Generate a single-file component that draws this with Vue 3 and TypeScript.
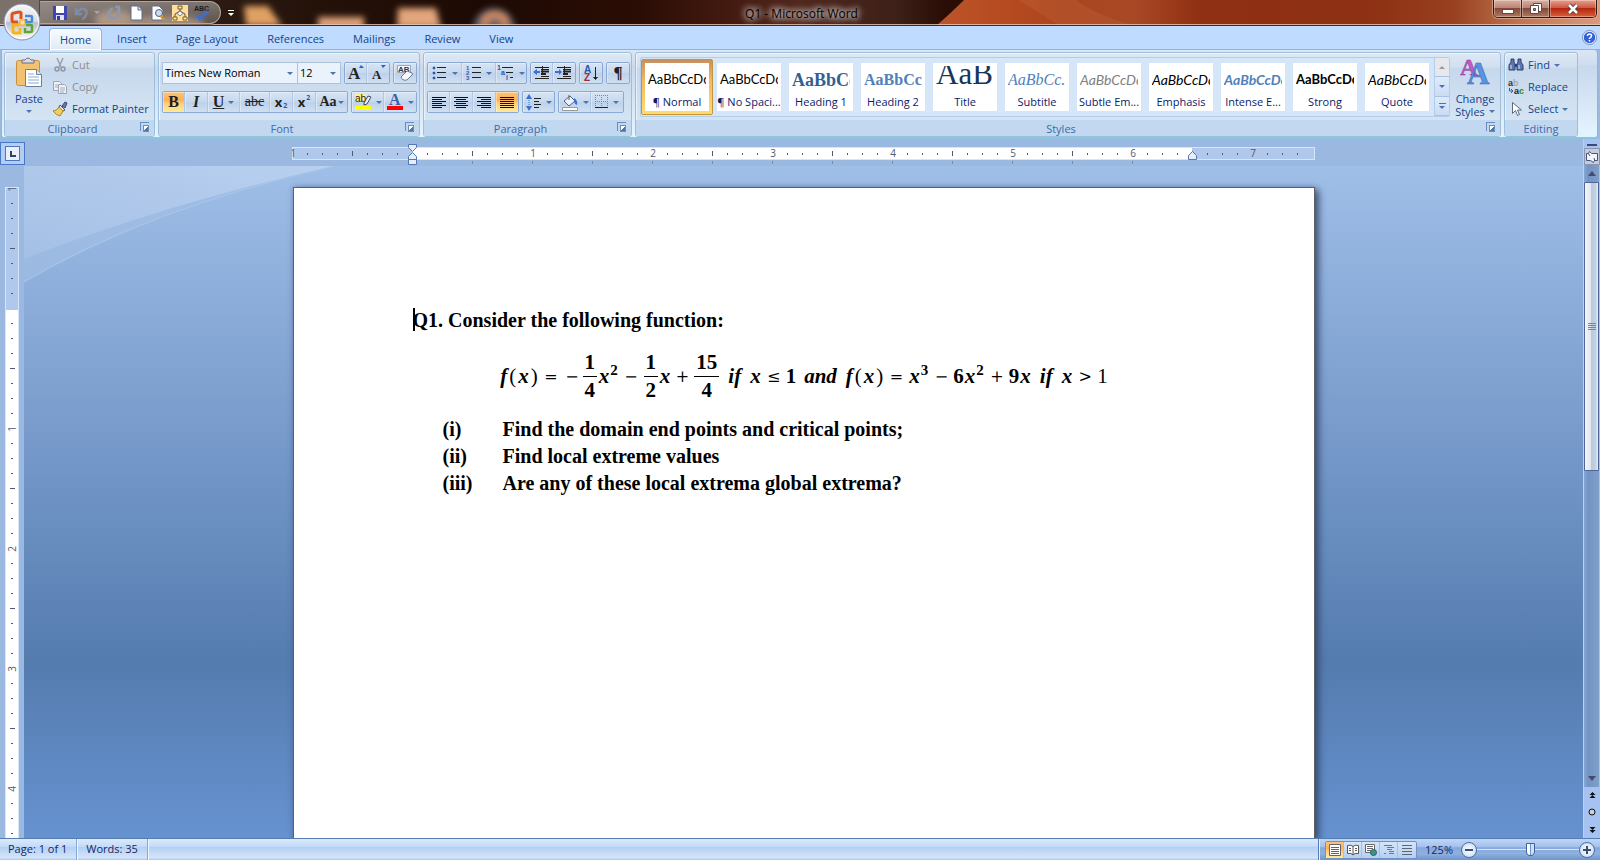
<script setup lang="ts">
import { ref } from 'vue'

interface StyleTile { name: string; sample: string; kind: string }
interface Tick { at: number; label: string; half: boolean }

const tabs: string[] = ['Home', 'Insert', 'Page Layout', 'References', 'Mailings', 'Review', 'View']
const activeTab = ref('Home')

const tiles: StyleTile[] = [
  { name: '¶ Normal', sample: 'AaBbCcDc', kind: 'plain' },
  { name: '¶ No Spaci...', sample: 'AaBbCcDc', kind: 'plain' },
  { name: 'Heading 1', sample: 'AaBbCc', kind: 'h1' },
  { name: 'Heading 2', sample: 'AaBbCc', kind: 'h2' },
  { name: 'Title', sample: 'AaB', kind: 'title' },
  { name: 'Subtitle', sample: 'AaBbCc.', kind: 'subtitle' },
  { name: 'Subtle Em...', sample: 'AaBbCcDc', kind: 'subtle' },
  { name: 'Emphasis', sample: 'AaBbCcDc', kind: 'emphasis' },
  { name: 'Intense E...', sample: 'AaBbCcDc', kind: 'intense' },
  { name: 'Strong', sample: 'AaBbCcDc', kind: 'strong' },
  { name: 'Quote', sample: 'AaBbCcDc', kind: 'emphasis' },
]
const activeTile = ref('¶ Normal')

const zoom = ref(125)

/* One tick every eighth of an inch; an inch is 120px at 125% zoom. */
function makeTicks(count: number): Tick[] {
  return Array.from({ length: count }, (_, i) => {
    const eighth = i - 8
    const whole = eighth % 8 === 0
    return {
      at: i * 15,
      label: whole && eighth !== 0 ? String(Math.abs(eighth / 8)) : '',
      half: Math.abs(eighth % 8) === 4,
    }
  }).filter((t) => t.at !== 120)
}
const hTicks = makeTicks(68)
const vTicks = makeTicks(90)
const tabStops: number[] = Array.from({ length: 12 }, (_, i) => 180 + i * 60)

const questions = [
  { no: '(i)', text: 'Find the domain end points and critical points;' },
  { no: '(ii)', text: 'Find local extreme values' },
  { no: '(iii)', text: 'Are any of these local extrema global extrema?' },
]
</script>

<template>
  <div class="app">
    <header class="titlebar">
      <svg class="wallpaper" viewBox="0 0 1600 26" preserveAspectRatio="none" aria-hidden="true">
        <defs>
          <linearGradient id="wall" x1="0" x2="1" y1="0" y2="0">
            <stop offset="0" stop-color="#7b716b" /><stop offset=".028" stop-color="#7d736d" />
            <stop offset=".05" stop-color="#5f5149" /><stop offset=".14" stop-color="#2b1a12" />
            <stop offset=".2" stop-color="#241209" /><stop offset=".3" stop-color="#1d0a04" />
            <stop offset=".4" stop-color="#2b0d05" /><stop offset=".455" stop-color="#431a10" />
            <stop offset=".5" stop-color="#50281e" /><stop offset=".56" stop-color="#3d2018" />
            <stop offset=".59" stop-color="#2a0e06" />
          </linearGradient>
          <linearGradient id="rust" x1="0" x2="1" y1="0" y2="0">
            <stop offset="0" stop-color="#bd5429" /><stop offset=".12" stop-color="#b4491f" />
            <stop offset=".2" stop-color="#a9461f" /><stop offset=".3" stop-color="#a84825" />
            <stop offset=".4" stop-color="#8f2f13" />
            <stop offset=".65" stop-color="#8d3013" /><stop offset=".78" stop-color="#98401f" />
            <stop offset=".88" stop-color="#c07552" /><stop offset="1" stop-color="#dc9a7a" />
          </linearGradient>
          <filter id="soft" x="-20%" y="-60%" width="140%" height="220%"><feGaussianBlur stdDeviation="3" /></filter>
        </defs>
        <rect width="1600" height="26" fill="url(#wall)" />
        <g filter="url(#soft)">
          <ellipse cx="115" cy="20" rx="20" ry="10" fill="#d8b08c" />
          <ellipse cx="165" cy="24" rx="40" ry="9" fill="#b59a84" />
          <path d="M244 6h24l14 20h-36z" fill="#e0a063" />
          <path d="M318 17h46v12h-46z" fill="#e0a27a" />
          <path d="M398 8h38l5 20h-44z" fill="#e2a57c" />
          <circle cx="494" cy="29" r="21" fill="#5d6068" />
          <path d="M484 26q1-11 11-11q10 0 11 11" fill="none" stroke="#d08a60" stroke-width="7" />
        </g>
        <path d="M936 26Q952 12 964 0H1600V26z" fill="url(#rust)" />
        <path d="M1018 0q24 14 42 26h74Q1090 12 1076 0z" fill="#c5683e" opacity=".3" />
        <path d="M0 24.500H1600" stroke="#e9c9b5" stroke-width="1" opacity=".8" />
        <path d="M0 25.500H1600" stroke="#3b2a25" stroke-width="1" />
      </svg>

      <nav class="quick" aria-label="Quick access">
        <button aria-label="Save"><svg width="16" height="16" viewBox="0 0 16 16"><path d="M1 1h14v14H2l-1-1z" fill="#4146ad" /><path d="M4 1h8v7H4z" fill="#fff" /><path d="M4 10h8v5H4z" fill="#dde2fb" /><path d="M5 11h3v4H5z" fill="#383a94" /></svg></button>
        <button aria-label="Undo" class="dim undo"><svg width="16" height="16" viewBox="0 0 16 16"><path d="M2 3v6h6M2.500 8Q6 3 10 4t2 6q-1 3-4 4" fill="none" stroke="#7d8ba8" stroke-width="2.500" /></svg><i class="arr pale"></i></button>
        <button aria-label="Repeat" class="dim"><svg width="16" height="16" viewBox="0 0 16 16"><path d="M9 2h4v5M12 4Q15 10 9 13 3 14 3 9q0-4 4-6" fill="none" stroke="#8a98b2" stroke-width="2.500" /></svg></button>
        <button aria-label="New"><svg width="16" height="16" viewBox="0 0 16 16"><path d="M3 1h7l4 4v10H3z" fill="#fff" stroke="#5f6d8c" /><path d="M10 1v4h4" fill="#d6e2f2" stroke="#5f6d8c" /></svg></button>
        <button aria-label="Print Preview"><svg width="16" height="16" viewBox="0 0 16 16"><path d="M2 1h7l4 4v10H2z" fill="#fff" stroke="#5f6d8c" /><circle cx="9" cy="8" r="3.500" fill="#c8dcf2" stroke="#525d72" /><path d="m11 11 3 4" stroke="#d99022" stroke-width="2.500" /></svg></button>
        <button aria-label="Diagram" class="hot"><svg width="16" height="16" viewBox="0 0 16 16"><path d="M8 4v2M8 6 3 9v3M8 6l5 3v3" fill="none" stroke="#6b5232" /><path d="M6 1h4v3H6zM1 12h4v3H1zM11 12h4v3h-4z" fill="#ffe9a5" stroke="#7a5c16" /><path d="m8 6 3 2.500L8 11 5 8.500z" fill="#eaf4ff" stroke="#77889c" /></svg></button>
        <button aria-label="Spelling"><svg width="18" height="18" viewBox="0 0 18 18"><text x="0" y="7" font-size="7" font-weight="bold" fill="#1b1b1b" font-family="Liberation Sans, sans-serif">ABC</text><path d="m3 11 3 4 8-8" fill="none" stroke="#3b6fd0" stroke-width="3" /></svg></button>
      </nav>
      <button class="customize" aria-label="Customize quick access"><i></i><i class="arr white"></i></button>
      <h1 class="wintitle">Q1 - Microsoft Word</h1>
      <div class="winbtns">
        <button aria-label="Minimize"><svg width="14" height="12" viewBox="0 0 14 12"><rect x="1.500" y="6.500" width="11" height="4" fill="#fff" stroke="#5d4a48" /></svg></button>
        <button aria-label="Restore"><svg width="14" height="13" viewBox="0 0 14 13"><path d="M4.500 1.500h8v8h-8z" fill="#fff" stroke="#5d4a48" /><path d="M1.500 3.500h8v8h-8z" fill="#fff" stroke="#5d4a48" /><path d="M4.500 6.500h2v2h-2z" fill="#b78274" stroke="#5d4a48" /></svg></button>
        <button aria-label="Close" class="close"><svg width="14" height="12" viewBox="0 0 14 12"><path d="m3 2 8 8M11 2l-8 8" stroke="#4d3a40" stroke-width="4.500" /><path d="m3 2 8 8M11 2l-8 8" stroke="#fff" stroke-width="2.500" /></svg></button>
      </div>
    </header>

    <button class="orb" aria-label="Office Button">
      <svg width="38" height="38" viewBox="0 0 38 38">
        <defs>
          <linearGradient id="orbg" x1="0" x2="0" y1="0" y2="1"><stop offset="0" stop-color="#f5f6f8" /><stop offset=".48" stop-color="#dcdfe6" /><stop offset=".52" stop-color="#b8bfcd" /><stop offset="1" stop-color="#fff" /></linearGradient>
        </defs>
        <circle cx="19" cy="19" r="18" fill="url(#orbg)" stroke="#8b90a0" stroke-width="1" />
        <circle cx="19" cy="19" r="16.500" fill="none" stroke="#fff" opacity=".8" />
        <g fill="none" stroke-width="3">
          <path d="M18 16V10q0-1-2-1l-5 1q-2 0-2 2v5q0 2 2 2h4" stroke="#e2501c" />
          <path d="M22 13h5q2 0 2 1v4q0 1-2 1h-4v-3" stroke="#4a8ad8" stroke-width="2.500" />
          <path d="M16 22h-5q-1 0-1 1v5q0 2 2 2h5v-5" stroke="#f5b51b" />
          <path d="M23 22h4q2 0 2 1v5q0 1-2 1h-5v-4" stroke="#5ea532" stroke-width="2.500" />
        </g>
        <path d="M17 17h5v5h-5z" fill="#fbe3a0" stroke="#f0a42c" />
      </svg>
    </button>

    <nav class="tabs" aria-label="Ribbon tabs">
      <button v-for="t in tabs" :key="t" :class="{ on: t === activeTab }" @click="activeTab = t">{{ t }}</button>
      <button class="help" aria-label="Help"><svg width="15" height="15" viewBox="0 0 15 15"><circle cx="7.500" cy="7.500" r="6.500" fill="#2f62dc" stroke="#fff" stroke-width="1.500" /><circle cx="7.500" cy="7.500" r="7" fill="none" stroke="#6b85b8" /><path d="M5.500 6q0-2 2-2t2 2q0 1-2 2.300v.7M7.500 10v1.500" fill="none" stroke="#fff" stroke-width="1.500" /></svg></button>
    </nav>

    <section class="ribbon">
      <div class="group clipboard">
        <div class="body">
          <button class="paste">
            <svg width="28" height="31" viewBox="0 0 28 31"><rect x="1.500" y="3.500" width="23" height="25" rx="2" fill="#f2c272" stroke="#c98f3a" /><path d="M7 6V3h3q3-4 6 0h3v3z" fill="#d9dce2" stroke="#6d6d75" /><path d="M10.500 12.500h11l5 5v12h-16z" fill="#fff" stroke="#6b7f9f" /><path d="M21.500 12.500v5h5" fill="#d9e5f5" stroke="#6b7f9f" /><path d="M13 17h6M13 20h11M13 23h11M13 26h11" stroke="#8fa8ce" /></svg>
            <span>Paste</span><i class="arr"></i>
          </button>
          <div class="stack">
            <button class="dim"><svg width="16" height="16" viewBox="0 0 16 16"><path d="m5 1 4 9M11 1 7 10" stroke="#9aa1ab" stroke-width="1.500" /><circle cx="5" cy="12" r="2" fill="none" stroke="#8f96a0" stroke-width="1.500" /><circle cx="11" cy="12" r="2" fill="none" stroke="#8f96a0" stroke-width="1.500" /></svg>Cut</button>
            <button class="dim"><svg width="16" height="16" viewBox="0 0 16 16"><path d="M1.500 2.500h6l2 2v7h-8z" fill="#eef2f7" stroke="#9ba4b3" /><path d="M3 6h4M3 8h4" stroke="#a5aebd" /><path d="M6.500 5.500h6l2 2v7h-8z" fill="#eef2f7" stroke="#9ba4b3" /><path d="M8 9h5M8 11h5M8 13h4" stroke="#a5aebd" /></svg>Copy</button>
            <button><svg width="16" height="16" viewBox="0 0 16 16"><path d="m10 5 3-4 2 1-2 5z" fill="#6a78a8" stroke="#3a4a7e" /><path d="m8 4 5 5-2 1-4-4z" fill="#e9e9ef" stroke="#555" /><path d="m7 6 4 4-3 5q-4-1-7-5 4 0 6-4z" fill="#f4cf5e" stroke="#a8842a" /></svg>Format Painter</button>
          </div>
        </div>
        <footer><span>Clipboard</span><button class="launch" aria-label="Clipboard dialog"></button></footer>
      </div>

      <div class="group font">
        <div class="body rows">
          <div class="row">
            <div class="combo family"><select aria-label="Font"><option>Times New Roman</option></select><i class="arr"></i></div>
            <div class="combo size"><select aria-label="Font size"><option>12</option></select><i class="arr"></i></div>
            <div class="box">
              <button class="w22" aria-label="Grow font"><svg width="18" height="18" viewBox="0 0 18 18"><text x="1" y="15" font-size="17" font-weight="bold" fill="#222" font-family="Liberation Serif, serif">A</text><path d="m12 4 2-3 3 3z" fill="#2f62c0" /></svg></button>
              <button class="w22" aria-label="Shrink font"><svg width="18" height="18" viewBox="0 0 18 18"><text x="3" y="15" font-size="13" font-weight="bold" fill="#222" font-family="Liberation Serif, serif">A</text><path d="m12 1 2 3 3-3z" fill="#2f62c0" /></svg></button>
            </div>
            <div class="box"><button class="w22" aria-label="Clear formatting"><svg width="18" height="18" viewBox="0 0 18 18"><path d="M1.500 1.500h13v7h-13z" fill="#f8fafc" stroke="#99a4b8" /><text x="2" y="8" font-size="8" font-weight="bold" fill="#333" font-family="Liberation Sans, sans-serif">AB</text><path d="m5 13 6-6 5 2q1 1 0 2l-5 5q-5 1-6-3z" fill="#f6f7fb" stroke="#6d7894" /></svg></button></div>
          </div>
          <div class="row">
            <div class="box">
              <button class="w22 lit glyph" aria-label="Bold"><b>B</b></button>
              <button class="w23 glyph" aria-label="Italic"><b><em>I</em></b></button>
              <button class="w32 glyph" aria-label="Underline"><b><u>U</u></b><i class="arr"></i></button>
              <button class="w28 glyph small" aria-label="Strikethrough"><s>abc</s></button>
              <button class="w23 glyph sans" aria-label="Subscript">x<sub>2</sub></button>
              <button class="w23 glyph sans" aria-label="Superscript">x<sup>2</sup></button>
              <button class="w30 glyph mid" aria-label="Change case">Aa<i class="arr"></i></button>
            </div>
            <div class="box">
              <button class="w32" aria-label="Highlight"><svg width="18" height="18" viewBox="0 0 18 18"><path d="M1 1h11v8H1z" fill="#fff28a" /><text x="1" y="9" font-size="10" fill="#222" font-family="Liberation Sans, sans-serif">ab</text><path d="m10 10 4-7 3 1-4 7-3 1z" fill="#e8eef8" stroke="#3f4c66" /><path d="M1 13h16v4H1z" fill="#ff0" /></svg><i class="arr"></i></button>
              <button class="w32" aria-label="Font color"><svg width="18" height="18" viewBox="0 0 18 18"><text x="3" y="12" font-size="16" font-weight="bold" fill="#3c5fa8" font-family="Liberation Serif, serif">A</text><path d="M1 13h16v4H1z" fill="#f00" /></svg><i class="arr"></i></button>
            </div>
          </div>
        </div>
        <footer><span>Font</span><button class="launch" aria-label="Font dialog"></button></footer>
      </div>

      <div class="group paragraph">
        <div class="body rows">
          <div class="row">
            <div class="box">
              <button class="w33" aria-label="Bullets"><svg width="16" height="16" viewBox="0 0 16 16"><path d="M5 2.500h9M5 7.500h9M5 12.500h9" stroke="#222" /><path d="M1 2h2v2H1zM1 7h2v2H1zM1 12h2v2H1z" fill="#2b57a8" stroke="#2b57a8" stroke-width=".5" /></svg><i class="arr"></i></button>
              <button class="w33" aria-label="Numbering"><svg width="16" height="16" viewBox="0 0 16 16"><path d="M6 2.500h9M6 7.500h9M6 12.500h9" stroke="#222" /><g font-size="6" font-weight="bold" fill="#2b57a8" font-family="Liberation Sans, sans-serif"><text x="0" y="5">1</text><text x="0" y="10">2</text><text x="0" y="15">3</text></g></svg><i class="arr"></i></button>
              <button class="w28" aria-label="Multilevel list"><svg width="18" height="16" viewBox="0 0 18 16"><path d="M5 2.500h11M9 7.500h7M13 12.500h3" stroke="#222" /><g font-size="7" font-weight="bold" fill="#2b57a8" font-family="Liberation Sans, sans-serif"><text x="0" y="5">1</text><text x="4" y="10">a</text><text x="9" y="15">i</text></g></svg><i class="arr"></i></button>
            </div>
            <div class="box">
              <button class="w22" aria-label="Decrease indent"><svg width="18" height="16" viewBox="0 0 18 16"><path d="M2 2.500h14M8 4.500h8M8 11.500h8M2 13.500h14" stroke="#222" /><path d="M8 9h5M8 6.500h8" stroke="#222" stroke-width="2" /><path d="M9.500 1v14" stroke="#222" stroke-dasharray="1 1" /><path d="m0 7 4-3v2h3v2H4v2z" fill="#3b6fd0" /></svg></button>
              <button class="w22" aria-label="Increase indent"><svg width="18" height="16" viewBox="0 0 18 16"><path d="M2 2.500h14M8 4.500h8M8 11.500h8M2 13.500h14" stroke="#222" /><path d="M8 9h5M8 6.500h8" stroke="#222" stroke-width="2" /><path d="M9.500 1v14" stroke="#222" stroke-dasharray="1 1" /><path d="M7 7 4 4v2H0v2h4v2z" fill="#3b6fd0" /></svg></button>
            </div>
            <div class="box"><button class="w22" aria-label="Sort"><svg width="16" height="17" viewBox="0 0 16 17"><g font-size="10" font-weight="bold" font-family="Liberation Sans, sans-serif"><text x="1" y="8" fill="#2b57a8">A</text><text x="1" y="16" fill="#9b2d3a">Z</text></g><path d="M12.500 2v12M10.500 12l2 2.500 2-2.500" fill="#222" stroke="#222" /></svg></button></div>
            <div class="box"><button class="w22 mark" aria-label="Show marks">¶</button></div>
          </div>
          <div class="row">
            <div class="box">
              <button class="w22" aria-label="Align left"><svg width="16" height="14" viewBox="0 0 16 14"><path d="M1 2.500h14M1 4.500h10M1 6.500h14M1 8.500h10M1 10.500h14M1 12.500h10" stroke="#111" /></svg></button>
              <button class="w23" aria-label="Center"><svg width="16" height="14" viewBox="0 0 16 14"><path d="M1 2.500h14M3 4.500h10M1 6.500h14M3 8.500h10M1 10.500h14M3 12.500h10" stroke="#111" /></svg></button>
              <button class="w23" aria-label="Align right"><svg width="16" height="14" viewBox="0 0 16 14"><path d="M1 2.500h14M5 4.500h10M1 6.500h14M5 8.500h10M1 10.500h14M5 12.500h10" stroke="#111" /></svg></button>
              <button class="w22 lit" aria-label="Justify"><svg width="16" height="14" viewBox="0 0 16 14"><path d="M1 2.500h14M1 4.500h14M1 6.500h14M1 8.500h14M1 10.500h14M1 12.500h14" stroke="#111" /></svg></button>
            </div>
            <div class="box"><button class="w30" aria-label="Line spacing"><svg width="16" height="17" viewBox="0 0 16 17"><path d="m3 0 3 5H0zM3 17l3-5H0z" fill="#3b6fd0" /><path d="M3 4v9" stroke="#3b6fd0" stroke-dasharray="1 1" /><path d="M8 4.500h7M8 7.500h5M8 10.500h7M8 13.500h5" stroke="#222" /></svg><i class="arr"></i></button></div>
            <div class="box">
              <button class="w32" aria-label="Shading"><svg width="18" height="17" viewBox="0 0 18 17"><path d="m3 7 6-5 5 5-6 5z" fill="#eef2f8" stroke="#55627c" /><path d="M8 6V1" stroke="#55627c" /><path d="M13 4q4 2 3 7-3-1-3-5z" fill="#3b6fd0" /><path d="M1.500 13.500h15v3h-15z" fill="#fff" stroke="#9a9a9a" /></svg><i class="arr"></i></button>
              <button class="w32" aria-label="Borders"><svg width="14" height="14" viewBox="0 0 14 14"><path d="M.5 0v14M6.500 0v14M12.500 0v14M0 .5h13M0 6.500h13" stroke="#7d8796" stroke-dasharray="1 1" /><path d="M0 12.500h13" stroke="#222" /></svg><i class="arr"></i></button>
            </div>
          </div>
        </div>
        <footer><span>Paragraph</span><button class="launch" aria-label="Paragraph dialog"></button></footer>
      </div>

      <div class="group styles">
        <div class="body">
          <div class="gallery">
            <div class="tiles">
              <button v-for="s in tiles" :key="s.name" class="tile" :class="{ on: s.name === activeTile }" @click="activeTile = s.name">
                <span class="face"><span class="sample" :class="s.kind">{{ s.sample }}</span><span class="cap">{{ s.name }}</span></span>
              </button>
            </div>
            <div class="scrolls">
              <button class="off" aria-label="Previous styles"><i class="arr up"></i></button>
              <button aria-label="Next styles"><i class="arr"></i></button>
              <button aria-label="More styles"><i class="bar"></i><i class="arr"></i></button>
            </div>
          </div>
          <button class="change">
            <svg width="30" height="28" viewBox="0 0 30 28"><g font-weight="bold" font-family="Liberation Serif, serif"><text x="0" y="18" font-size="24" fill="#c05bc4" stroke="#8a3b9a" stroke-width=".5">A</text><text x="7" y="27" font-size="31" fill="#5b93e0" stroke="#2f5fb0" stroke-width=".5">A</text></g></svg>
            <span>Change</span><span class="line">Styles <i class="arr"></i></span>
          </button>
        </div>
        <footer><span>Styles</span><button class="launch" aria-label="Styles dialog"></button></footer>
      </div>

      <div class="group editing">
        <div class="body stack">
          <button><svg width="16" height="16" viewBox="0 0 16 16"><path d="M3 2h3v3l1 2v6H1V8l2-3zM10 2h3v3l2 3v5H9V7l1-2z" fill="#5d77ae" stroke="#2c4376" /><path d="M7 7h2v3H7z" fill="#2c4376" /><path d="M3 8v4M11 8v4" stroke="#dfe9f8" /></svg>Find<i class="arr"></i></button>
          <button><svg width="16" height="16" viewBox="0 0 16 16"><g font-size="9" font-weight="bold" font-family="Liberation Sans, sans-serif"><text x="0" y="7" fill="#333">a</text><text x="5" y="7" fill="#aaa">b</text><text x="6" y="15" fill="#222">a</text><text x="11" y="15" fill="#2a8a2a">c</text></g><path d="M1.500 9v3h3M3 10l2 2-2 2" fill="none" stroke="#2f5fb0" /></svg>Replace</button>
          <button><svg width="16" height="16" viewBox="0 0 16 16"><path d="M4.500 1.500v11l3-3 2 5 2-1-2-4.500h4z" fill="#fff" stroke="#5d6b85" /></svg>Select<i class="arr"></i></button>
        </div>
        <footer><span>Editing</span></footer>
      </div>
    </section>

    <main class="workspace">
      <div class="corner"><button aria-label="Tab selector"><svg width="15" height="15" viewBox="0 0 15 15"><rect x=".5" y=".5" width="14" height="14" fill="#e9f0fa" stroke="#4a78c4" /><path d="M6 5v5h5" fill="none" stroke="#2d4468" stroke-width="2" /></svg></button></div>
      <div class="hruler">
        <svg width="1024" height="27" viewBox="0 0 1024 27">
          <rect x=".5" y="8.500" width="1022" height="12" fill="#b0c8ec" stroke="#d6e5f8" />
          <rect x="120" y="9" width="780" height="11" fill="#fff" />
          <g v-for="t in hTicks" :key="t.at">
            <text v-if="t.label" :x="t.at + 1" y="18" class="num">{{ t.label }}</text>
            <path v-else-if="t.half" :d="`M${t.at + 0.5} 12v5`" stroke="#4f5a70" />
            <path v-else :d="`M${t.at + 0.5} 14v2`" stroke="#4f5a70" />
          </g>
          <path v-for="s in tabStops" :key="s" :d="`M${s + 0.5} 22v3`" stroke="#7c8ca5" />
          <g fill="#e6eefa" stroke="#5177b5"><path d="M116.500 5.500h8v3l-4 4-4-4zM116.500 20.500v-3l4-4 4 4v3zM116.500 20.500h8v5h-8z" /><path d="M896.500 20.500v-4l4-4 4 4v4z" /></g>
        </svg>
      </div>
      <div class="vruler">
        <svg width="24" height="1400" viewBox="0 0 24 1400">
          <rect x="5.500" y="21.500" width="13" height="1360" fill="#b0c8ec" stroke="#d6e5f8" />
          <rect x="6" y="144" width="12" height="1230" fill="#fff" />
          <g v-for="t in vTicks" :key="t.at">
            <text v-if="t.label" class="num" :transform="`translate(16 ${t.at + 23}) rotate(-90)`">{{ t.label }}</text>
            <path v-else-if="t.half" :d="`M10 ${t.at + 22.5}h5`" stroke="#4f5a70" />
            <path v-else :d="`M11 ${t.at + 22.5}h2`" stroke="#4f5a70" />
          </g>
        </svg>
      </div>
      <div class="desk">
        <svg class="swoosh" width="310" height="118" viewBox="0 0 310 118" aria-hidden="true">
          <defs><linearGradient id="sw" x1="0" x2="1" y1="1" y2="0"><stop offset="0" stop-color="#a4c0e5" /><stop offset="1" stop-color="#b9d0f0" /></linearGradient></defs>
          <path d="M0 0h310Q150 34 0 116z" fill="#a3c0e4" opacity=".6" />
          <path d="M0 0h310Q140 38 0 93z" fill="url(#sw)" />
          <path d="M310 0Q120 44 0 116" fill="none" stroke="#a9c6eb" />
        </svg>
        <article class="page">
          <p class="lead"><span class="caret"></span>Q1. Consider the following function:</p>
          <div class="eq">
            <span class="v">f</span><span class="par">(</span><span class="v">x</span><span class="par">)</span>
            <span class="op">=</span><span class="op neg">−</span>
            <span class="frac"><span>1</span><span>4</span></span><span class="v">x<sup>2</sup></span>
            <span class="op">−</span><span class="frac"><span>1</span><span>2</span></span><span class="v">x</span>
            <span class="op tight">+</span><span class="frac wide"><span>15</span><span>4</span></span>
            <span class="v word">if</span><span class="v word">x</span><span class="op">≤</span><span>1</span>
            <span class="v word">and</span><span class="v word">f</span><span class="par">(</span><span class="v">x</span><span class="par">)</span>
            <span class="op">=</span><span class="v">x<sup>3</sup></span><span class="op">−</span><span>6</span><span class="v">x<sup>2</sup></span>
            <span class="op">+</span><span>9</span><span class="v">x</span><span class="v word">if</span><span class="v word">x</span>
            <span class="op">&gt;</span><span class="light">1</span>
          </div>
          <ol>
            <li v-for="q in questions" :key="q.no"><span class="no">{{ q.no }}</span><span>{{ q.text }}</span></li>
          </ol>
        </article>
      </div>
      <aside class="vscroll">
        <div class="split"></div>
        <button class="rulerbtn" aria-label="View ruler"><svg width="14" height="14" viewBox="0 0 14 14"><path d="M1.500 3.500h2l1-2 2 2h6v7h-3l-1 2-3-2h-4z" fill="#f2f5fb" stroke="#45557a" /><path d="m3 3 2 3M9 8l1 3" stroke="#45557a" /></svg></button>
        <div class="track">
          <button class="step" aria-label="Scroll up"><i class="tri up"></i></button>
          <div class="thumb"><i></i><i></i><i></i><i></i></div>
          <div class="rest"></div>
          <button class="step" aria-label="Scroll down"><i class="tri"></i></button>
        </div>
        <div class="browse">
          <button aria-label="Previous page"><svg width="7" height="7" viewBox="0 0 7 7"><path d="m3.500 0 3 3h-6zM3.500 3l3 3h-6z" fill="#111" /></svg></button>
          <button aria-label="Select browse object"><svg width="8" height="8" viewBox="0 0 8 8"><circle cx="4" cy="4" r="3" fill="#c9d0da" stroke="#111" /></svg></button>
          <button aria-label="Next page"><svg width="7" height="7" viewBox="0 0 7 7"><path d="m3.500 4-3-3h6zM3.500 7l-3-3h6z" fill="#111" /></svg></button>
        </div>
      </aside>
    </main>

    <footer class="status">
      <button class="cell">Page: 1 of 1</button>
      <button class="cell">Words: 35</button>
      <div class="views">
        <div class="modes">
          <button class="lit" aria-label="Print Layout"><svg width="12" height="12" viewBox="0 0 12 12"><path d="M.5.5h11v11H.5z" fill="#fff" stroke="#666" /><path d="M2 3.500h8M2 5.500h8M2 7.500h8M2 9.500h8" stroke="#666" /></svg></button>
          <button aria-label="Reading"><svg width="12" height="12" viewBox="0 0 12 12"><path d="M.5 1.500q4-1 5.500 1 1.500-2 5.500-1v8q-4-1-5.500 1.500Q4.500 8.500.5 9.500z" fill="#fff" stroke="#555" /><path d="M6 2v9M2 4.500h2M2 6.500h2M8 4.500h2M8 6.500h2" stroke="#555" /></svg></button>
          <button aria-label="Web Layout"><svg width="12" height="12" viewBox="0 0 12 12"><path d="M.5.5h9v8h-9z" fill="#fff" stroke="#666" /><path d="M2 2.500h6M2 4.500h6M2 6.500h4" stroke="#666" /><circle cx="8.500" cy="8.500" r="3" fill="#3c9a70" stroke="#25588f" /></svg></button>
          <button aria-label="Outline"><svg width="12" height="12" viewBox="0 0 12 12"><path d="M1 1.500h8M4 3.500h7M4 5.500h5M6 7.500h5M1 9.500h2M6 9.500h5" stroke="#6b7686" /></svg></button>
          <button aria-label="Draft"><svg width="12" height="12" viewBox="0 0 12 12"><path d="M1 1.500h10M1 4.500h10M1 7.500h10M1 10.500h10" stroke="#5c6675" /></svg></button>
        </div>
        <button class="pct">{{ zoom }}%</button>
        <button class="round" aria-label="Zoom out"><i class="h"></i></button>
        <input v-model="zoom" class="slider" type="range" min="20" max="220" aria-label="Zoom" />
        <button class="round" aria-label="Zoom in"><i class="h"></i><i class="vv"></i></button>
      </div>
    </footer>
  </div>
</template>

<style>
html, body { margin: 0; overflow: hidden; }
</style>

<style scoped>
.app { position: relative; display: flex; flex-direction: column; height: 100vh; overflow: hidden; font: 11px/14px "Open Sans", "Noto Sans", sans-serif; color: #15428b; background: #9cbae0; }
.app * { box-sizing: border-box; }
button { border: 0; padding: 0; margin: 0; background: none; font: inherit; color: inherit; display: flex; align-items: center; justify-content: center; }
svg { flex: none; display: block; }
.arr { flex: none; width: 0; height: 0; border: 3px solid transparent; border-top-color: #4f73b0; border-bottom: 0; }
.arr.up { border-top: 0; border-bottom: 3px solid #9a9a9a; }
.arr.pale { border-top-color: #a5a5ad; }
.arr.white { border-top-color: #fff; }

.titlebar { position: relative; flex: none; height: 26px; display: flex; align-items: flex-start; }
.wallpaper { position: absolute; inset: 0; width: 100%; height: 100%; }
.quick { position: relative; display: flex; align-items: center; gap: 6px; height: 23px; margin: 1px 0 0 40px; padding: 0 11px 0 12px; width: 181px; border: 1px solid #b0a49c; border-left: 0; border-radius: 0 12px 12px 0; background: linear-gradient(#9a9390bb, #8a7e7888); box-shadow: 0 0 0 1px #2a1c1680; }
.quick .undo { gap: 4px; }
.quick .hot { background: #ffdf9c; }
.customize { position: relative; flex-direction: column; gap: 2px; margin: 10px 0 0 5px; width: 10px; }
.customize i:first-child { width: 6px; height: 1px; background: #fff; }
.wintitle { position: absolute; left: 0; right: 0; top: 6px; margin: 0; padding-left: 3px; text-align: center; font-weight: 400; font-size: 12px; line-height: 16px; color: #000; text-shadow: 0 0 6px #fff9, 0 0 6px #fff9, 0 0 9px #fff9, 0 0 10px #fffb; }
.winbtns { position: relative; display: flex; margin: 0 3px 0 auto; height: 18px; border: 1px solid #2f1a17; border-top: 0; border-radius: 0 0 5px 5px; overflow: hidden; box-shadow: 0 0 0 1px #e0b7a4aa; }
.winbtns button { width: 28px; background: linear-gradient(#dcb0a0, #b98574 45%, #84493a 50%, #b07862); box-shadow: inset 0 0 0 1px #ffffff55; border-right: 1px solid #3d2420; }
.winbtns .close { width: 46px; border: 0; background: linear-gradient(#e6a08c, #cc5a44 45%, #b4260f 50%, #d9603a); }

.orb { position: absolute; left: 3px; top: 3px; z-index: 2; }

.tabs { position: relative; flex: none; display: flex; align-items: flex-end; height: 24px; padding-left: 49px; background: #bfdbff; border-bottom: 1px solid #8db2e3; }
.tabs button { height: 22px; padding: 0 14px 0 15px; margin-bottom: -1px; line-height: 20px; }
.tabs .on { padding: 0 10px; border: 1px solid #8db2e3; border-bottom: 0; border-radius: 4px 4px 0 0; background: linear-gradient(#f7fbff, #dfeaf7); box-shadow: inset 0 0 0 1px #fff; }
.tabs .help { margin: 0 3px 4px auto; padding: 0; height: 16px; }

.ribbon { flex: none; display: flex; gap: 3px; height: 89px; padding: 2px 19px 0 2px; margin: 0 2px 0 1px; border: 1px solid #8db2e3; border-top: 0; border-bottom: 2px solid #89c6dd; border-radius: 0 4px 4px 4px; background: linear-gradient(#dbe6f4, #cfddef 17%, #c8d8ed 18%, #e0effc 85%, #e3f4ff); }
.group { display: flex; flex-direction: column; height: 85px; border: 1px solid #9ebfdb; border-radius: 3px; background: linear-gradient(#dee8f5, #d1dff0 17%, #c7d8ed 18%, #d8e8f5); box-shadow: inset 1px 1px 0 #ffffff80; }
.body { flex: 1; display: flex; min-height: 0; }
.group > footer { flex: none; display: flex; height: 16px; background: #c1d8f0; border-radius: 0 0 3px 3px; color: #3e6aaa; align-items: center; }
.group > footer span { flex: 1; text-align: center; line-height: 16px; padding-top: 1px; }
.launch { width: 9px; height: 9px; margin: 0 5px 3px 0; border: 1px solid #668ebf; border-right: 0; border-bottom: 0; }
.launch::after { content: ""; width: 5px; height: 5px; margin: 2px 0 0 2px; background: linear-gradient(135deg, #fff 45%, #52739c 46%); border: 1px solid #668ebf; }
.clipboard { width: 151px; }
.font { width: 262px; }
.paragraph { width: 209px; }
.styles { flex: 1; min-width: 0; }
.editing { width: 74px; }

.paste { flex-direction: column; width: 44px; padding: 1px 0 0 4px; justify-content: flex-start; margin-top: 3px; }
.paste span { margin: 4px 0 4px; }
.stack { display: flex; flex-direction: column; padding: 1px 0 0 3px; align-items: flex-start; }
.stack button { height: 22px; gap: 4px; }
.dim { color: #8d8d8d; }

.rows { flex-direction: column; gap: 7px; padding: 9px 0 0 3px; }
.row { display: flex; gap: 3px; height: 22px; }
.box { display: flex; border: 1px solid #8ba9d4; border-radius: 2px; background: linear-gradient(#d7e4f4, #c6d8ee 50%, #bdd1ea 52%, #cfe0f3); }
.box button { gap: 4px; border-right: 1px solid #b0c8e6; box-shadow: inset 1px 1px 0 #ffffff60; color: #222; }
.box button:last-child { border-right: 0; }
.w22 { width: 22px; } .w23 { width: 23px; } .w28 { width: 30px; } .w30 { width: 31px; } .w32 { width: 32px; } .w33 { width: 34px; }
.box .lit, .modes .lit { background: linear-gradient(#fbc57c, #fdb053 40%, #fdd27c 60%, #fdeb9a); }
.glyph { font: 700 16px/18px "Liberation Serif", serif; }
.glyph.small { font-size: 14px; font-weight: 400; }
.glyph.mid { font-size: 14px; }
.glyph.sans { font: 700 13px/14px "Open Sans", sans-serif; }
.box .glyph.sans, .box .glyph.mid { gap: 1px; }
.glyph sub, .glyph sup { font-size: 7px; line-height: 8px; color: #2b57a8; align-self: flex-end; margin-bottom: 2px; }
.glyph sup { align-self: flex-start; margin-top: 2px; }
.mark { font: 700 17px/18px "Liberation Serif", serif; }
.combo { position: relative; display: flex; background: #eaf2fb; border: 1px solid #abc1de; }
.combo select { appearance: none; width: 100%; border: 0; padding: 0 2px; background: none; font: inherit; color: #000; outline: 0; }
.combo .arr { position: absolute; right: 4px; top: 9px; }
.family { width: 136px; margin-right: -4px; }
.size { width: 44px; }

.styles .body { padding: 4px 3px 0 4px; gap: 3px; }
.gallery { flex: 1; display: flex; min-width: 0; height: 60px; border: 1px solid #b5cdec; background: #d4e6f8; border-radius: 2px; }
.tiles { flex: 1; min-width: 0; display: flex; overflow: hidden; padding-top: 1px; }
.tile { flex: none; width: 72px; height: 56px; padding: 4px; }
.tile.on { background: linear-gradient(#c99060, #f3bb62 40%, #ffdb6c); border: 1px solid #c2953f; padding: 3px; border-radius: 2px; }
.face { width: 64px; height: 48px; display: flex; flex-direction: column; background: #fff; overflow: hidden; }
.sample { height: 31px; margin: 0 3px; overflow: hidden; display: block; text-align: left; white-space: nowrap; font: 13px/33px Lato, sans-serif; color: #000; }
.cap { text-align: center; line-height: 16px; color: #0b1a6b; white-space: nowrap; }
.h1 { font: 700 18px/34px "Liberation Serif", serif; color: #365f91; }
.h2 { font: 700 16px/34px "Liberation Serif", serif; color: #4f81bd; }
.title { font: 31px/15px "Liberation Serif", serif; color: #17365d; height: 24px; margin: 3px 3px 4px; }
.subtitle { font: italic 16px/33px "Liberation Serif", serif; color: #4f81bd; }
.subtle, .emphasis, .intense { font-size: 14px; font-style: italic; }
.subtle { color: #808080; }
.intense { font-weight: 700; color: #4f81bd; }
.strong { font-weight: 700; }
.scrolls { width: 15px; display: flex; flex-direction: column; border-left: 1px solid #b5cdec; }
.scrolls button { flex: 1; flex-direction: column; gap: 2px; background: linear-gradient(#dfebfa, #c9dcf4); border-bottom: 1px solid #a6c1e4; }
.scrolls .off { background: #e6e8ec; }
.bar { width: 7px; height: 1px; background: #4f73b0; }
.change { flex-direction: column; width: 44px; justify-content: flex-start; }
.change span { line-height: 13px; }
.change svg { margin-bottom: 7px; }
.line { display: flex; align-items: center; gap: 4px; }

.workspace { flex: 1; min-height: 0; display: grid; grid-template-columns: 24px minmax(0, 1fr) 17px; grid-template-rows: 27px minmax(0, 1fr); background: #9bb9e0; }
.corner { border: 1px solid #4a78c8; background: #b5cdf0; margin: 3px -1px 1px 0; display: flex; align-items: center; justify-content: center; }
.hruler { display: flex; justify-content: center; overflow: hidden; }
.num { font-size: 10px; fill: #4f5a70; text-anchor: middle; }
.vruler { grid-row: 2; overflow: hidden; }
.desk { position: relative; grid-row: 2; grid-column: 2; display: flex; justify-content: center; overflow: hidden; padding-top: 21px; background: linear-gradient(#9fbfe8, #8aabd8 22%, #6f93c5 48%, #557caf 74%, #6692d0); }
.swoosh { position: absolute; left: 0; top: 0; }
.page { position: relative; width: 1022px; max-width: 100%; padding: 119px 119px 0; background: #fff; border: 1px solid #5f6064; border-bottom: 0; box-shadow: 4px 3px 7px #2d405fcc, 0 0 5px #3f5a8a60; color: #000; font: 700 20px/27px "Liberation Serif", serif; }
.lead { position: relative; margin: 0; }
.caret { position: absolute; left: 0; top: 1px; width: 2px; height: 23px; background: #000; }
.eq { display: flex; justify-content: center; align-items: center; height: 60px; margin: 12px 0 10px; font-size: 21px; white-space: nowrap; }
.eq .v { font-style: italic; padding: 0 1px; }
.eq sup { font-size: 15px; font-style: normal; line-height: 10px; margin-left: 1px; }
.eq .word { margin-left: 7px; }
.par, .light { font-weight: 400; }
.par { padding: 0 1px; }
.op { width: 14px; margin: 0 5px; text-align: center; font: 400 16px/27px "DejaVu Serif", serif; }
.neg { margin: 0 3px 0 2px; }
.op.tight { margin: 0 4px; }
.frac { display: flex; flex-direction: column; width: 14px; text-align: center; margin: 0 1px; }
.frac.wide { width: 25px; }
.frac span { line-height: 27px; height: 27px; }
.frac span + span { border-top: 1px solid #000; }
ol { list-style: none; margin: 0; padding: 0 0 0 30px; }
li { display: flex; }
.no { width: 60px; }

.vscroll { grid-column: 3; grid-row: 1 / 3; display: flex; flex-direction: column; background: #a5c2f0; border-left: 1px solid #b9d1f5; padding-top: 5px; }
.split { flex: none; height: 2px; margin: 0 3px; background: #3f4a70; }
.rulerbtn { flex: none; height: 17px; margin-top: 2px; background: #c3cbdc; border: 1px solid #8b97b2; }
.track { flex: 1; display: flex; flex-direction: column; margin-right: 1px; background: linear-gradient(90deg, #86a6d3, #7294c4 30%, #7f9fca); }
.step { height: 17px; }
.tri { width: 0; height: 0; border: 4px solid transparent; border-top: 5px solid #454a6c; border-bottom: 0; }
.tri.up { border-top: 0; border-bottom: 5px solid #454a6c; }
.thumb { flex: 289; display: flex; flex-direction: column; gap: 1px; align-items: center; justify-content: center; border: 1px solid #52659b; border-radius: 1px; background: linear-gradient(90deg, #f5f6f8, #dfe6ec 45%, #b9cade 50%, #c2d0e0 80%, #e6edf6); }
.thumb i { width: 8px; height: 1px; background: #7d8494; }
.rest { flex: 301; }
.browse { flex: none; height: 51px; display: flex; flex-direction: column; align-items: center; justify-content: space-around; }

.status { flex: none; display: flex; height: 22px; border-top: 1px solid #567db1; background: linear-gradient(#dceafb, #c4dbf9 35%, #b3d0f5 40%, #d5e5fa 90%, #a8c3e8); color: #15275f; }
.cell { padding: 0 9px 2px 8px; border-right: 1px solid #86a8d6; box-shadow: 1px 0 0 #eef5ff; }
.cell + .cell { padding-left: 9px; }
.views { margin-left: auto; display: flex; align-items: center; padding: 0 5px 0 6px; border-left: 1px solid #567db1; background: linear-gradient(#c0d6f5, #a5c3ed 35%, #86a9dc 42%, #8fb0e0 70%, #6f95ca); box-shadow: inset 1px 0 0 #e5f0ff; }
.modes { display: flex; height: 18px; border: 1px solid #6d92c8; border-radius: 2px; background: linear-gradient(#d5e5f9, #b5cff1); }
.modes button { width: 18px; border-right: 1px solid #a5c0e6; }
.modes button:last-child { border: 0; }
.pct { width: 44px; }
.round { position: relative; width: 16px; height: 16px; border-radius: 50%; border: 1px solid #4b6fa8; background: radial-gradient(#fff, #c2d7f3); }
.round .h { width: 8px; height: 2px; background: #3c4f70; }
.round .vv { position: absolute; left: 6px; top: 3px; width: 2px; height: 8px; background: #3c4f70; }
.slider { appearance: none; width: 102px; height: 16px; margin: 0; background: linear-gradient(#d8e7fb, #d8e7fb) center / 100% 1px no-repeat; outline: 0; }
.slider::-webkit-slider-thumb { appearance: none; width: 9px; height: 13px; border: 1px solid #3f639c; background: linear-gradient(90deg, #fff 3px, #6d93cb 3px 4px, #cfe0f6 4px); border-radius: 1px 1px 5px 5px; }
</style>
